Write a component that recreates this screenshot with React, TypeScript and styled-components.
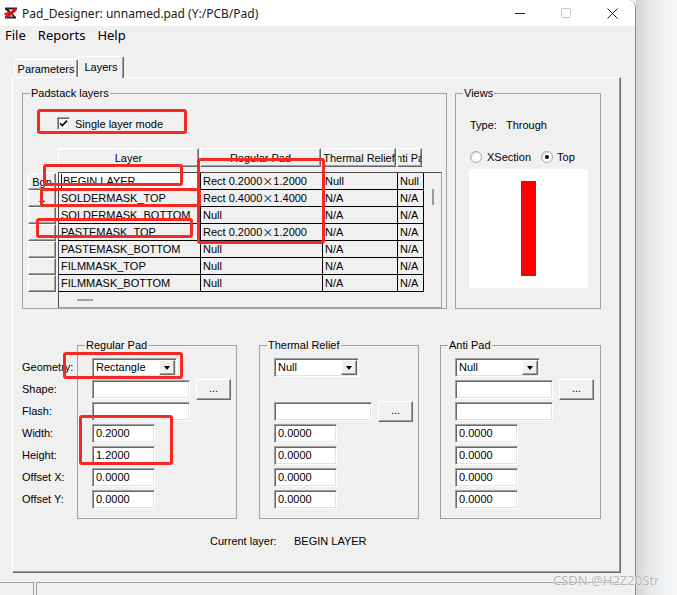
import React from 'react';
import styled, { createGlobalStyle, css } from 'styled-components';

const GlobalStyle = createGlobalStyle`
    html, body {
        margin: 0;
        padding: 0;
    }
    body {
        width: 677px;
        height: 595px;
        overflow: hidden;
        background: #f2f3f5;
        font-family: "Liberation Sans", Arial, sans-serif;
        color: #000;
    }
`;

// classic win32 bevels
const sunken = css`
    box-sizing: border-box;
    border: 1px solid;
    border-color: #a0a0a0 #fff #fff #a0a0a0;
    box-shadow: inset 1px 1px #696969, inset -1px -1px #e3e3e3;
    background: #fff;
`;

const raised = css`
    box-sizing: border-box;
    border: 1px solid;
    border-color: #fff #696969 #696969 #fff;
    box-shadow: inset -1px -1px #a0a0a0;
    background: #f0f0f0;
`;

const Screen = styled.div`
    position: relative;
    display: flex;
    width: 677px;
    height: 595px;
    overflow: hidden;
`;

const Window = styled.div`
    box-sizing: border-box;
    width: 636px;
    height: 595px;
    flex: none;
    display: flex;
    flex-direction: column;
    background: #f0f0f0;
    border-right: 1px solid #8c8c8c;
    border-top-right-radius: 8px;
    overflow: hidden;
`;

const Desktop = styled.div`
    flex: 1;
    background: linear-gradient(90deg, #d4d4d5 0%, #e6e6e8 30%, #f1f2f4 70%, #f4f5f7 100%);
`;

const TitleBar = styled.div`
    height: 26px;
    flex: none;
    display: flex;
    align-items: center;
    background: #fff;
    padding-left: 3px;
`;

const TitleText = styled.span`
    margin-left: 3px;
    font-family: "Noto Sans", "Open Sans", sans-serif;
    font-size: 12px;
    color: #1b1b1b;
`;

const Controls = styled.div`
    margin-left: auto;
    display: flex;
    height: 100%;
`;

const Control = styled.div`
    width: 46px;
    height: 100%;
    display: flex;
    align-items: center;
    justify-content: center;
`;

const MenuBar = styled.div`
    height: 18px;
    flex: none;
    display: flex;
    align-items: center;
    gap: 12px;
    padding-left: 5px;
    font-family: "Noto Sans", "Open Sans", sans-serif;
    font-size: 13px;
`;

const MenuItem = styled.span`
    line-height: 18px;
`;

const Content = styled.div`
    margin-top: 12px;
    padding-left: 12px;
    display: flex;
    flex-direction: column;
`;

const TabStrip = styled.div`
    height: 21px;
    display: flex;
    align-items: flex-end;
    padding-left: 2px;
`;

const Tab = styled.div<{ $w: number; $active?: boolean }>`
    position: relative;
    z-index: 1;
    box-sizing: border-box;
    width: ${p => p.$w}px;
    height: ${p => (p.$active ? 22 : 18)}px;
    margin-bottom: ${p => (p.$active ? -1 : 0)}px;
    display: flex;
    align-items: center;
    justify-content: center;
    border-top: 1px solid #fff;
    border-left: 1px solid #fff;
    border-right: 1px solid #696969;
    box-shadow: inset -1px 0 #a0a0a0;
    border-radius: 2px 2px 0 0;
    background: #f0f0f0;
    font-size: 11px;
    padding-bottom: ${p => (p.$active ? 2 : 0)}px;
`;

const Panel = styled.div`
    box-sizing: border-box;
    width: 609px;
    height: 496px;
    display: flex;
    flex-direction: column;
    border-top: 1px solid #fff;
    border-left: 1px solid #fff;
    border-right: 1px solid #696969;
    border-bottom: 1px solid #696969;
    box-shadow: inset -1px -1px #a0a0a0;
`;

const TopRow = styled.div`
    margin-top: 9px;
    padding-left: 9px;
    display: flex;
    gap: 8px;
`;

const Group = styled.fieldset<{ $w: number; $h: number }>`
    box-sizing: border-box;
    width: ${p => p.$w}px;
    height: ${p => p.$h}px;
    flex: none;
    margin: 0;
    padding: 0;
    min-width: 0;
    border: 1px solid #a0a0a0;
`;

const Legend = styled.legend`
    margin-left: 7px;
    padding: 0 1px;
    font-size: 11px;
    line-height: 13px;
`;

const CheckRow = styled.label`
    margin: 17px 0 0 34px;
    height: 13px;
    display: flex;
    align-items: center;
    gap: 5px;
    font-size: 11px;
`;

const CheckBox = styled.span`
    ${sunken};
    width: 13px;
    height: 13px;
    display: flex;
    align-items: center;
    justify-content: center;
`;

const LayerGrid = styled.div`
    margin: 18px 0 0 5px;
    display: grid;
    grid-template-columns: 28px 384px;
    column-gap: 2px;
    row-gap: 5px;
`;

const HeaderRow = styled.div`
    display: flex;
`;

const HeaderCell = styled.div<{ $w: number }>`
    ${raised};
    width: ${p => p.$w - 1}px;
    margin-right: 1px;
    height: 19px;
    flex: none;
    display: flex;
    align-items: center;
    justify-content: center;
    overflow: hidden;
    white-space: nowrap;
    font-size: 11px;
`;

const RowHeaders = styled.div`
    padding-top: 1px;
    display: flex;
    flex-direction: column;
`;

const RowHeader = styled.div`
    ${raised};
    width: 28px;
    height: 17px;
    display: flex;
    align-items: center;
    justify-content: center;
    font-size: 11px;
    overflow: hidden;
`;

const DataBox = styled.div`
    box-sizing: border-box;
    width: 384px;
    height: 136px;
    display: flex;
    border: 1px solid;
    border-color: #4a4a4a #a0a0a0 #a0a0a0 #4a4a4a;
`;

const Table = styled.div`
    width: 365px;
    flex: none;
    display: flex;
    flex-direction: column;
`;

const Row = styled.div`
    display: flex;
`;

const Cell = styled.div<{ $w: number; $edit?: boolean }>`
    box-sizing: border-box;
    width: ${p => p.$w}px;
    height: 17px;
    flex: none;
    display: flex;
    align-items: center;
    padding-left: 2px;
    border-right: 1px solid #000;
    border-bottom: 1px solid #000;
    background: ${p => (p.$edit ? '#fff' : '#f0f0f0')};
    font-size: 11px;
    white-space: nowrap;
    overflow: hidden;
`;

const Caret = styled.span`
    width: 1px;
    height: 14px;
    background: #000;
    margin-right: 1px;
    flex: none;
`;

const Times = styled.span`
    font-family: "Noto Sans CJK SC", sans-serif;
    font-size: 11px;
`;

const HScrollZone = styled.div`
    flex: 1;
`;

const HThumb = styled.div`
    margin: 7px 0 0 18px;
    width: 16px;
    height: 2px;
    background: #a0a0a0;
`;

const VScrollZone = styled.div`
    flex: 1;
`;

const VThumb = styled.div`
    margin: 16px 0 0 8px;
    width: 2px;
    height: 16px;
    background: #9a9a9a;
`;

const ViewsBody = styled.div`
    padding: 19px 0 0 14px;
    display: flex;
    flex-direction: column;
    font-size: 11px;
`;

const TypeRow = styled.div`
    line-height: 13px;
    display: flex;
    gap: 9px;
`;

const RadioRow = styled.div`
    margin-top: 18px;
    height: 13px;
    display: flex;
    align-items: center;
`;

const Radio = styled.span<{ $on?: boolean }>`
    box-sizing: border-box;
    width: 12px;
    height: 12px;
    border-radius: 50%;
    border: 1px solid #a8a8a8;
    background: #fff;
    box-shadow: inset 1px 1px #d8d8d8;
    display: flex;
    align-items: center;
    justify-content: center;
    margin-right: ${p => (p.$on ? 4 : 5)}px;

    &::after {
        content: '';
        width: 4px;
        height: 4px;
        border-radius: 50%;
        background: ${p => (p.$on ? '#000' : 'transparent')};
    }
`;

const RadioLabel = styled.span`
    margin-right: 10px;
`;

const Canvas = styled.div`
    margin: 6px 0 0 -1px;
    width: 119px;
    height: 119px;
    background: #fff;
    display: flex;
    align-items: center;
    justify-content: center;
`;

const PadShape = styled.div`
    width: 15px;
    height: 95px;
    background: #ff0000;
`;

const BottomRow = styled.div`
    margin-top: 30px;
    padding-left: 9px;
    display: flex;
`;

const LabelCol = styled.div`
    width: 55px;
    flex: none;
    padding-top: 17px;
    display: flex;
    flex-direction: column;
`;

const FieldLabel = styled.div`
    height: 22px;
    display: flex;
    align-items: center;
    font-size: 11px;
    white-space: nowrap;
`;

const PadGroup = styled(Group)<{ $gap: number }>`
    margin-left: ${p => p.$gap}px;
`;

const GroupBody = styled.div`
    padding: 4px 0 0 14px;
    display: flex;
    flex-direction: column;
`;

const FormRow = styled.div`
    height: 22px;
    display: flex;
    align-items: center;
    gap: 6px;
`;

const Select = styled.div`
    ${sunken};
    width: 85px;
    height: 19px;
    display: flex;
    align-items: center;
    padding: 0 1px 0 3px;
    font-size: 11px;
`;

const SelectText = styled.span`
    flex: 1;
`;

const SelectButton = styled.span`
    ${raised};
    width: 16px;
    height: 15px;
    display: flex;
    align-items: center;
    justify-content: center;

    &::after {
        content: '';
        border-left: 3.5px solid transparent;
        border-right: 3.5px solid transparent;
        border-top: 4px solid #000;
        margin-top: 1px;
    }
`;

const TextBox = styled.div<{ $w: number }>`
    ${sunken};
    width: ${p => p.$w}px;
    height: 19px;
    display: flex;
    align-items: center;
    padding-left: 3px;
    font-size: 11px;
`;

const DotsButton = styled.div`
    ${raised};
    width: 35px;
    height: 21px;
    display: flex;
    align-items: center;
    justify-content: center;
    font-size: 11px;
    padding-bottom: 2px;
`;

const CurrentLayer = styled.div`
    margin-top: 16px;
    padding-left: 197px;
    display: flex;
    font-size: 11px;
    line-height: 13px;
`;

const CurrentLabel = styled.span`
    width: 84px;
`;

const StatusBar = styled.div`
    margin-top: 9px;
    flex: 1;
    display: flex;
    gap: 2px;
    padding-right: 16px;
`;

const StatusPane = styled.div<{ $grow?: boolean }>`
    width: ${p => (p.$grow ? 'auto' : '33px')};
    flex: ${p => (p.$grow ? 1 : 'none')};
    border-top: 1px solid #a0a0a0;
    border-left: ${p => (p.$grow ? '1px solid #a0a0a0' : 'none')};
    border-right: ${p => (p.$grow ? 'none' : '1px solid #a0a0a0')};
`;

// red highlight boxes drawn over the screenshot
const Mark = styled.div<{ $x: number; $y: number; $w: number; $h: number }>`
    position: absolute;
    left: ${p => p.$x}px;
    top: ${p => p.$y}px;
    width: ${p => p.$w}px;
    height: ${p => p.$h}px;
    box-sizing: border-box;
    border: 3px solid #f62a22;
    border-radius: 3px;
    pointer-events: none;
`;

const Watermark = styled.div`
    position: absolute;
    left: 553px;
    top: 572px;
    font-family: "Noto Sans", sans-serif;
    font-size: 13px;
    line-height: 16px;
    color: #b4b4b4;
    text-shadow: 0 0 1px #fff, 0 0 2px #fff;
    white-space: nowrap;
`;

const COLS = [142, 122, 75, 26];

type Layer = {
    head: string;
    name: string;
    regular: string;
    thermal: string;
    anti: string;
    editing?: boolean;
};

const rect = (w: string, h: string) => (
    <>Rect {w}<Times>×</Times>{h}</>
);

const layers: Layer[] = [
    { head: 'Bgn', name: 'BEGIN LAYER', regular: 'rect:0.2000:1.2000', thermal: 'Null', anti: 'Null', editing: true },
    { head: '→', name: 'SOLDERMASK_TOP', regular: 'rect:0.4000:1.4000', thermal: 'N/A', anti: 'N/A' },
    { head: '', name: 'SOLDERMASK_BOTTOM', regular: 'Null', thermal: 'N/A', anti: 'N/A' },
    { head: '', name: 'PASTEMASK_TOP', regular: 'rect:0.2000:1.2000', thermal: 'N/A', anti: 'N/A' },
    { head: '', name: 'PASTEMASK_BOTTOM', regular: 'Null', thermal: 'N/A', anti: 'N/A' },
    { head: '', name: 'FILMMASK_TOP', regular: 'Null', thermal: 'N/A', anti: 'N/A' },
    { head: '', name: 'FILMMASK_BOTTOM', regular: 'Null', thermal: 'N/A', anti: 'N/A' },
];

const padText = (v: string) => {
    if (v.startsWith('rect:')) {
        const [, w, h] = v.split(':');
        return rect(w, h);
    }
    return v;
};

const AppIcon = () => (
    <svg width="16" height="16" viewBox="0 0 16 16">
        <path d="M2 2.5h12v2H5.5L13 12v1.5H2v-2h8.5L2 4.5z" fill="#222" />
        <path d="M3 12.5 L13 4" stroke="#e01010" strokeWidth="3" />
        <path d="M1.5 9.5 L6 7.5 L9 9" stroke="#e01010" strokeWidth="2" fill="none" />
    </svg>
);

const FieldRows = ({ geometry, shapeDots, flashDots, shape = true, values }: {
    geometry: string;
    shapeDots?: boolean;
    flashDots?: boolean;
    shape?: boolean;
    values: string[];
}) => (
    <GroupBody>
        <FormRow>
            <Select>
                <SelectText>{geometry}</SelectText>
                <SelectButton />
            </Select>
        </FormRow>
        <FormRow>
            {shape && <TextBox $w={98} />}
            {shapeDots && <DotsButton>...</DotsButton>}
        </FormRow>
        <FormRow>
            <TextBox $w={98} />
            {flashDots && <DotsButton>...</DotsButton>}
        </FormRow>
        {values.map((v, i) => (
            <FormRow key={ i }>
                <TextBox $w={63}>{v}</TextBox>
            </FormRow>
        ))}
    </GroupBody>
);

export default function App() {
    return (
        <>
            <GlobalStyle />
            <Screen>
                <Window>
                    <TitleBar>
                        <AppIcon />
                        <TitleText>Pad_Designer: unnamed.pad (Y:/PCB/Pad)</TitleText>
                        <Controls>
                            <Control>
                                <svg width="10" height="10" viewBox="0 0 10 10">
                                    <path d="M0 5.5h10" stroke="#1a1a1a" strokeWidth="1" />
                                </svg>
                            </Control>
                            <Control>
                                <svg width="10" height="10" viewBox="0 0 10 10">
                                    <rect x="0.5" y="0.5" width="9" height="9" fill="none" stroke="#c4c4c4" strokeWidth="1" rx="1" />
                                </svg>
                            </Control>
                            <Control>
                                <svg width="11" height="11" viewBox="0 0 11 11">
                                    <path d="M0.5 0.5L10.5 10.5M10.5 0.5L0.5 10.5" stroke="#1a1a1a" strokeWidth="1" />
                                </svg>
                            </Control>
                        </Controls>
                    </TitleBar>
                    <MenuBar>
                        <MenuItem>File</MenuItem>
                        <MenuItem>Reports</MenuItem>
                        <MenuItem>Help</MenuItem>
                    </MenuBar>
                    <Content>
                        <TabStrip>
                            <Tab $w={64}>Parameters</Tab>
                            <Tab $w={46} $active>Layers</Tab>
                        </TabStrip>
                        <Panel>
                            <TopRow>
                                <Group $w={425} $h={222}>
                                    <Legend>Padstack layers</Legend>
                                    <CheckRow>
                                        <CheckBox>
                                            <svg width="9" height="9" viewBox="0 0 9 9">
                                                <path d="M1 4.2 L3.4 6.6 L8 1.6" stroke="#000" strokeWidth="1.6" fill="none" />
                                            </svg>
                                        </CheckBox>
                                        Single layer mode
                                    </CheckRow>
                                    <LayerGrid>
                                        <div />
                                        <HeaderRow>
                                            <HeaderCell $w={COLS[0]}>Layer</HeaderCell>
                                            <HeaderCell $w={COLS[1]}>Regular Pad</HeaderCell>
                                            <HeaderCell $w={COLS[2]}>Thermal Relief</HeaderCell>
                                            <HeaderCell $w={COLS[3]}>Anti Pad</HeaderCell>
                                        </HeaderRow>
                                        <RowHeaders>
                                            {layers.map(l => (
                                                <RowHeader key={ l.name }>{l.head}</RowHeader>
                                            ))}
                                        </RowHeaders>
                                        <DataBox>
                                            <Table>
                                                {layers.map(l => (
                                                    <Row key={ l.name }>
                                                        <Cell $w={COLS[0]} $edit={l.editing}>
                                                            {l.editing && <Caret />}
                                                            {l.name}
                                                        </Cell>
                                                        <Cell $w={COLS[1]}>{padText(l.regular)}</Cell>
                                                        <Cell $w={COLS[2]}>{l.thermal}</Cell>
                                                        <Cell $w={COLS[3]}>{l.anti}</Cell>
                                                    </Row>
                                                ))}
                                                <HScrollZone>
                                                    <HThumb />
                                                </HScrollZone>
                                            </Table>
                                            <VScrollZone>
                                                <VThumb />
                                            </VScrollZone>
                                        </DataBox>
                                    </LayerGrid>
                                </Group>
                                <Group $w={146} $h={222}>
                                    <Legend>Views</Legend>
                                    <ViewsBody>
                                        <TypeRow>
                                            <span>Type:</span>
                                            <span>Through</span>
                                        </TypeRow>
                                        <RadioRow>
                                            <Radio />
                                            <RadioLabel>XSection</RadioLabel>
                                            <Radio $on />
                                            <span>Top</span>
                                        </RadioRow>
                                        <Canvas>
                                            <PadShape />
                                        </Canvas>
                                    </ViewsBody>
                                </Group>
                            </TopRow>
                            <BottomRow>
                                <LabelCol>
                                    {['Geometry:', 'Shape:', 'Flash:', 'Width:', 'Height:', 'Offset X:', 'Offset Y:'].map(t => (
                                        <FieldLabel key={ t }>{t}</FieldLabel>
                                    ))}
                                </LabelCol>
                                <PadGroup $w={160} $h={180} $gap={0}>
                                    <Legend>Regular Pad</Legend>
                                    <FieldRows geometry="Rectangle" shapeDots values={['0.2000', '1.2000', '0.0000', '0.0000']} />
                                </PadGroup>
                                <PadGroup $w={160} $h={180} $gap={22}>
                                    <Legend>Thermal Relief</Legend>
                                    <FieldRows geometry="Null" shape={false} flashDots values={['0.0000', '0.0000', '0.0000', '0.0000']} />
                                </PadGroup>
                                <PadGroup $w={161} $h={180} $gap={21}>
                                    <Legend>Anti Pad</Legend>
                                    <FieldRows geometry="Null" shapeDots values={['0.0000', '0.0000', '0.0000', '0.0000']} />
                                </PadGroup>
                            </BottomRow>
                            <CurrentLayer>
                                <CurrentLabel>Current layer:</CurrentLabel>
                                <span>BEGIN LAYER</span>
                            </CurrentLayer>
                        </Panel>
                    </Content>
                    <StatusBar>
                        <StatusPane />
                        <StatusPane $grow />
                    </StatusBar>
                </Window>
                <Desktop />

                <Mark $x={37} $y={109} $w={150} $h={25} />
                <Mark $x={43} $y={164} $w={140} $h={22} />
                <Mark $x={40} $y={188} $w={161} $h={19} />
                <Mark $x={36} $y={218} $w={157} $h={20} />
                <Mark $x={197} $y={158} $w={128} $h={86} />
                <Mark $x={63} $y={352} $w={120} $h={27} />
                <Mark $x={79} $y={415} $w={94} $h={50} />

                <Watermark>CSDN @H2Z20Str</Watermark>
            </Screen>
        </>
    );
}
